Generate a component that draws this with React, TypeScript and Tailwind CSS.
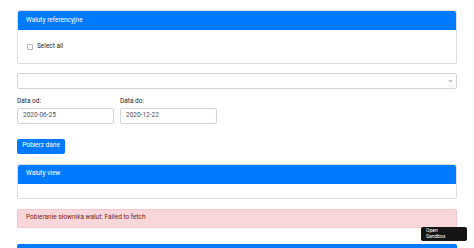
const App = () => {
  return (
    <div className="relative h-[248px] w-full overflow-hidden bg-white px-[17px] pt-[10px] text-[6.5px] leading-[1.5] text-[#212529] font-['Roboto',sans-serif]">
      {/* Waluty referencyjne */}
      <div className="rounded-[2px] border border-black/[0.125]">
        <div className="flex h-[19px] items-center rounded-t-[2px] bg-[#007bff] px-[8px] text-white">
          Waluty referencyjne
        </div>
        <div className="flex h-[33px] items-center gap-[4px] px-[9px]">
          <span className="h-[6px] w-[6px] rounded-[1px] border border-[#adb5bd] bg-white" />
          <span>Select all</span>
        </div>
      </div>

      {/* select */}
      <div className="mt-[9px] flex h-[16px] items-center justify-end rounded-[2px] border border-[#ced4da] px-[3px]">
        <svg width="5" height="4" viewBox="0 0 4 5">
          <path d="M0 1.5 L2 3.5 L4 1.5" fill="none" stroke="#343a40" strokeWidth="0.8" />
        </svg>
      </div>

      {/* daty */}
      <div className="mt-[8px] flex gap-[6px]">
        <div className="w-[97px]">
          <label className="mb-[1px] block">Data od:</label>
          <div className="flex h-[16px] items-center rounded-[2px] border border-[#ced4da] px-[5px] text-[#495057]">
            2020-06-25
          </div>
        </div>
        <div className="w-[97px]">
          <label className="mb-[1px] block">Data do:</label>
          <div className="flex h-[16px] items-center rounded-[2px] border border-[#ced4da] px-[5px] text-[#495057]">
            2020-12-22
          </div>
        </div>
      </div>

      <button
        type="button"
        className="mt-[15px] flex h-[15px] w-[48px] items-center justify-center rounded-[2px] bg-[#007bff] text-white"
      >
        Pobierz dane
      </button>

      {/* Waluty view */}
      <div className="mt-[10px] rounded-[2px] border border-black/[0.125]">
        <div className="flex h-[19px] items-center rounded-t-[2px] bg-[#007bff] px-[8px] text-white">
          Waluty view
        </div>
        <div className="h-[14px]" />
      </div>

      <div className="mt-[10px] flex h-[19px] items-center rounded-[2px] border border-[#f5c6cb] bg-[#f8d7da] px-[8px] text-[#721c24]">
        Pobieranie słownika walut: Failed to fetch
      </div>

      <div className="mt-[16px] h-[19px] rounded-t-[2px] bg-[#007bff]" />

      <div className="absolute left-[421px] top-[227px] flex h-[14px] w-[46px] flex-col justify-center rounded-[2px] bg-[#151515] px-[5px] text-[5px] leading-[1.15] text-white">
        <span>Open</span>
        <span>Sandbox</span>
      </div>
    </div>
  );
};

export default App;
